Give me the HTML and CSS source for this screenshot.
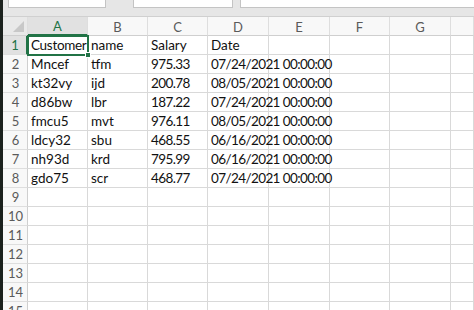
FILE: index.html
```html
<!DOCTYPE html>
<html>
	<head>
		<link rel="stylesheet" href="styles.css">
	</head>
	<body>
		<div class="edge"></div>
		<div class="main">
			<div class="toolbar">
				<div class="box box-name"></div>
				<div class="box box-mid"></div>
				<div class="box box-formula"></div>
			</div>
			<div class="sheet">
				<div class="hd corner"><span class="tri"></span></div>
				<div class="hd col sel">A</div>
				<div class="hd col">B</div>
				<div class="hd col">C</div>
				<div class="hd col">D</div>
				<div class="hd col">E</div>
				<div class="hd col">F</div>
				<div class="hd col">G</div>
				<div class="hd col"></div>

				<div class="hd row sel">1</div>
				<div class="cell active">Customer<span class="handle"></span></div>
				<div class="cell">name</div>
				<div class="cell">Salary</div>
				<div class="cell">Date</div>
				<div class="cell"></div>
				<div class="cell"></div>
				<div class="cell"></div>
				<div class="cell"></div>

				<div class="hd row">2</div>
				<div class="cell">Mncef</div>
				<div class="cell">tfm</div>
				<div class="cell num">975.33</div>
				<div class="cell num over">07/24/2021 00:00:00</div>
				<div class="cell"></div>
				<div class="cell"></div>
				<div class="cell"></div>
				<div class="cell"></div>

				<div class="hd row">3</div>
				<div class="cell">kt32vy</div>
				<div class="cell">ijd</div>
				<div class="cell num">200.78</div>
				<div class="cell num over">08/05/2021 00:00:00</div>
				<div class="cell"></div>
				<div class="cell"></div>
				<div class="cell"></div>
				<div class="cell"></div>

				<div class="hd row">4</div>
				<div class="cell">d86bw</div>
				<div class="cell">lbr</div>
				<div class="cell num">187.22</div>
				<div class="cell num over">07/24/2021 00:00:00</div>
				<div class="cell"></div>
				<div class="cell"></div>
				<div class="cell"></div>
				<div class="cell"></div>

				<div class="hd row">5</div>
				<div class="cell">fmcu5</div>
				<div class="cell">mvt</div>
				<div class="cell num">976.11</div>
				<div class="cell num over">08/05/2021 00:00:00</div>
				<div class="cell"></div>
				<div class="cell"></div>
				<div class="cell"></div>
				<div class="cell"></div>

				<div class="hd row">6</div>
				<div class="cell">ldcy32</div>
				<div class="cell">sbu</div>
				<div class="cell num">468.55</div>
				<div class="cell num over">06/16/2021 00:00:00</div>
				<div class="cell"></div>
				<div class="cell"></div>
				<div class="cell"></div>
				<div class="cell"></div>

				<div class="hd row">7</div>
				<div class="cell">nh93d</div>
				<div class="cell">krd</div>
				<div class="cell num">795.99</div>
				<div class="cell num over">06/16/2021 00:00:00</div>
				<div class="cell"></div>
				<div class="cell"></div>
				<div class="cell"></div>
				<div class="cell"></div>

				<div class="hd row">8</div>
				<div class="cell">gdo75</div>
				<div class="cell">scr</div>
				<div class="cell num">468.77</div>
				<div class="cell num over">07/24/2021 00:00:00</div>
				<div class="cell"></div>
				<div class="cell"></div>
				<div class="cell"></div>
				<div class="cell"></div>

				<div class="hd row">9</div>
				<div class="cell"></div><div class="cell"></div><div class="cell"></div><div class="cell"></div>
				<div class="cell"></div><div class="cell"></div><div class="cell"></div><div class="cell"></div>

				<div class="hd row">10</div>
				<div class="cell"></div><div class="cell"></div><div class="cell"></div><div class="cell"></div>
				<div class="cell"></div><div class="cell"></div><div class="cell"></div><div class="cell"></div>

				<div class="hd row">11</div>
				<div class="cell"></div><div class="cell"></div><div class="cell"></div><div class="cell"></div>
				<div class="cell"></div><div class="cell"></div><div class="cell"></div><div class="cell"></div>

				<div class="hd row">12</div>
				<div class="cell"></div><div class="cell"></div><div class="cell"></div><div class="cell"></div>
				<div class="cell"></div><div class="cell"></div><div class="cell"></div><div class="cell"></div>

				<div class="hd row">13</div>
				<div class="cell"></div><div class="cell"></div><div class="cell"></div><div class="cell"></div>
				<div class="cell"></div><div class="cell"></div><div class="cell"></div><div class="cell"></div>

				<div class="hd row">14</div>
				<div class="cell"></div><div class="cell"></div><div class="cell"></div><div class="cell"></div>
				<div class="cell"></div><div class="cell"></div><div class="cell"></div><div class="cell"></div>

				<div class="hd row">15</div>
				<div class="cell"></div><div class="cell"></div><div class="cell"></div><div class="cell"></div>
				<div class="cell"></div><div class="cell"></div><div class="cell"></div><div class="cell"></div>
			</div>
		</div>
	</body>
</html>
```

FILE: styles.css
```css
*{
	margin: 0;
	padding: 0;
	box-sizing: border-box;
}
html,body{
	height: 100%;
	width: 100%;
	overflow: hidden;
}
body{
	display: flex;
	flex-direction: row;
	background: #fff;
	font-family: Lato, "Liberation Sans", sans-serif;
}
.edge{
	width: 3px;
	flex: none;
	background: #1b211d;
}
.main{
	flex: 1;
	display: flex;
	flex-direction: column;
	min-width: 0;
}
.toolbar{
	height: 17px;
	flex: none;
	display: flex;
	flex-direction: row;
	align-items: flex-start;
	background: #e6e6e6;
	border-bottom: 1px solid #d0d0d0;
}
.box{
	height: 8px;
	background: #fff;
	border: 1px solid #c4c4c4;
	border-top: none;
}
.box-name{
	width: 98px;
	margin-left: 5px;
}
.box-mid{
	width: 100px;
	margin-left: 27px;
}
.box-formula{
	flex: 1;
	margin-left: 7px;
	border-right: none;
}
.sheet{
	display: grid;
	grid-template-columns: 25px 60px 60px 60px 61px 61px 60px 61px 1fr;
	grid-auto-rows: 19px;
	font-size: 13.5px;
	color: #111;
}
.hd{
	background: #f8f8f8;
	color: #5a5a5a;
	font-size: 13px;
	display: flex;
	align-items: center;
	justify-content: center;
	border-right: 1px solid #dedede;
	border-bottom: 1px solid #cfcfcf;
}
.hd.col{
	padding-top: 1px;
}
.hd.row{
	border-right: 1px solid #cfcfcf;
	border-bottom: 1px solid #dedede;
	padding-left: 1px;
}
.hd.sel{
	background: #e1e1e1;
	color: #217346;
}
.hd.col.sel{
	border-bottom: 2px solid #217346;
}
.hd.row.sel{
	border-right: 2px solid #217346;
}
.corner{
	background: #e9e9e9;
	position: relative;
}
.tri{
	position: absolute;
	right: 3px;
	bottom: 3px;
	width: 0;
	height: 0;
	border-left: 11px solid transparent;
	border-bottom: 11px solid #c8c8c8;
}
.cell{
	border-right: 1px solid #d9d9d9;
	border-bottom: 1px solid #d9d9d9;
	padding-left: 3px;
	line-height: 18px;
	white-space: nowrap;
	position: relative;
}
.cell.num{
	letter-spacing: -0.6px;
}
.cell.over{
	overflow: visible;
	z-index: 1;
}
.active{
	outline: 2px solid #217346;
	outline-offset: -1px;
	z-index: 2;
	letter-spacing: -0.3px;
}
.handle{
	position: absolute;
	right: -4px;
	bottom: -4px;
	width: 6px;
	height: 6px;
	background: #217346;
	border: 1px solid #fff;
}
```
